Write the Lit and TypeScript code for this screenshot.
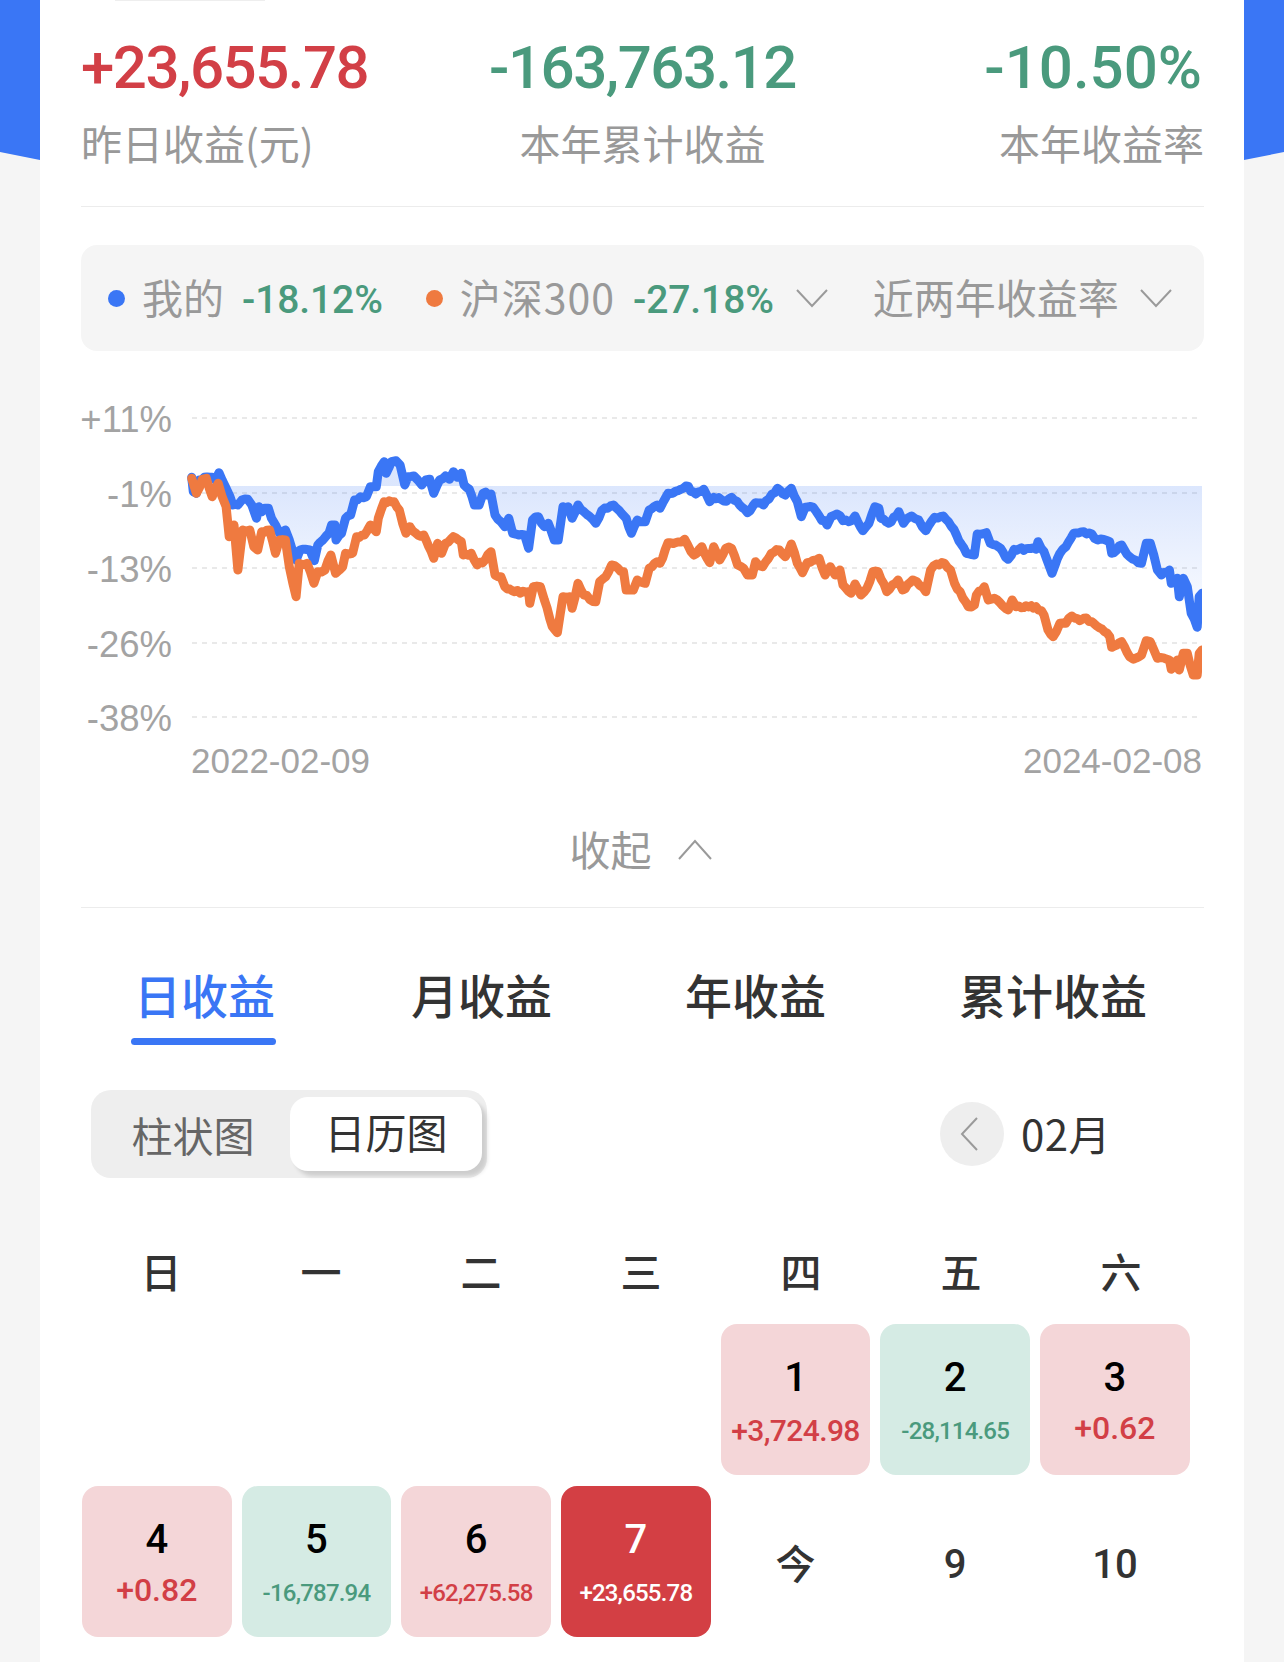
import { LitElement, html, svg, css } from "lit";
import { customElement } from "lit/decorators.js";

const LEFT_X = 2.529, RIGHT_X = 2.513;
const blueL = [333,262,337,305,345,310,352,270,365,262,385,262,393,270,402,248,410,270,420,295,430,320,437,345,450,345,460,330,475,328,485,345,497,385,503,350,510,365,518,355,527,355,535,385,545,405,555,430,570,420,580,450,590,490,597,510,607,480,620,478,632,480,643,512,652,465,665,450,680,430,687,405,695,405,698,450,712,430,722,385,735,375,745,330,760,320,775,320,785,290,800,290,805,245,820,215,825,250,838,215,850,212,860,225,872,285,880,260,895,258,905,270,915,285,925,270,935,268,945,310,960,270,975,258,985,268,995,245,1005,262,1015,250,1022,285,1035,298,1048,345,1060,345,1070,310,1090,312,1100,375,1115,395,1125,410,1135,385,1145,430,1160,435,1175,435,1185,475,1195,390,1210,380,1225,410,1235,400,1250,450,1260,450,1272,350,1285,350,1295,385,1310,345,1325,365,1340,380,1355,400,1370,362,1385,355,1400,345,1420,370,1432,385,1445,430,1460,390,1480,395,1490,360,1510,345];
const blueR = [0,355,20,310,45,302,65,288,90,312,110,298,125,335,135,322,160,333,180,322,200,345,220,368,240,338,260,345,295,295,315,315,330,295,345,335,355,380,365,352,385,352,400,378,420,405,430,380,445,372,460,392,475,395,490,378,510,422,525,400,540,350,550,355,555,385,575,400,600,365,612,400,632,378,650,390,668,422,690,382,712,378,725,395,745,435,770,490,790,495,797,432,820,428,830,460,850,470,875,508,890,478,945,478,950,455,965,485,985,550,1005,490,1020,470,1040,430,1065,425,1085,432,1100,450,1130,455,1135,490,1160,465,1180,500,1210,520,1222,460,1232,460,1250,540,1260,555,1280,540,1285,580,1300,565,1305,620,1315,565,1325,590,1335,670,1350,712,1355,620,1362,610];
const orangeL = [333,265,345,310,360,268,370,265,385,320,400,280,410,320,420,350,428,440,440,405,450,540,462,420,480,420,490,470,500,480,510,425,530,420,545,490,555,450,570,450,580,530,597,620,605,520,625,520,642,580,652,545,670,540,685,495,697,550,715,530,722,490,740,490,750,440,770,435,785,405,800,425,805,385,820,335,845,335,858,360,875,430,885,410,905,435,920,435,945,505,955,460,965,490,975,460,995,440,1015,455,1020,495,1040,490,1055,525,1075,510,1090,485,1100,555,1115,560,1125,590,1150,605,1185,605,1188,640,1197,590,1215,590,1225,630,1245,710,1258,728,1272,620,1290,620,1295,655,1310,580,1325,615,1355,635,1365,575,1380,560,1395,525,1425,545,1432,600,1450,600,1460,570,1480,580,1490,535,1510,515];
const orangeR = [0,520,20,458,45,456,62,448,85,495,105,470,125,518,135,470,150,510,165,475,180,475,195,525,210,535,220,555,232,555,240,515,258,530,280,490,300,480,315,500,330,462,345,520,358,548,370,518,400,505,415,555,428,530,440,555,452,540,460,585,480,610,490,582,505,615,520,595,535,545,548,545,570,605,598,570,610,600,635,570,645,575,668,605,680,540,695,522,715,520,730,540,740,580,775,650,790,645,795,615,815,590,825,630,840,625,875,660,885,630,895,650,945,650,965,675,975,720,988,740,1005,700,1020,700,1035,678,1055,692,1065,685,1085,695,1130,740,1135,772,1160,755,1180,800,1190,808,1210,795,1222,752,1232,755,1250,805,1280,810,1285,838,1300,810,1305,840,1315,790,1325,790,1340,855,1350,855,1355,790,1362,780];

const CHART_TOP = 380, CHART_LEFT = 81;
function mapPts(l: number[], r: number[]): [number, number][] {
  const out: [number, number][] = [];
  for (let i = 0; i < l.length; i += 2) out.push([60 + l[i] / LEFT_X - CHART_LEFT, 390 + l[i + 1] / 3 - CHART_TOP]);
  for (let i = 0; i < r.length; i += 2) out.push([660 + r[i] / RIGHT_X - CHART_LEFT, 390 + r[i + 1] / 3 - CHART_TOP]);
  return out;
}
function daily(pts: [number, number][], seed: number): string[] {
  const out: string[] = [];
  let n = seed;
  for (let i = 0; i < pts.length - 1; i++) {
    const [x0, y0] = pts[i], [x1, y1] = pts[i + 1];
    const steps = Math.max(1, Math.floor((x1 - x0) / 2.4));
    for (let s = 0; s < steps; s++) {
      const t = s / steps;
      n = (n * 9301 + 49297) % 233280;
      const j = s === 0 ? 0 : (n / 233280 - 0.5) * 3.2;
      out.push(`${(x0 + (x1 - x0) * t).toFixed(1)},${(y0 + (y1 - y0) * t + j).toFixed(1)}`);
    }
  }
  const last = pts[pts.length - 1];
  out.push(`${last[0].toFixed(1)},${last[1].toFixed(1)}`);
  return out;
}
const bluePts = daily(mapPts(blueL, blueR), 17);
const orangePts = daily(mapPts(orangeL, orangeR), 91);
const BASE = 486 - CHART_TOP;
const areaPts = [`${bluePts[0].split(",")[0]},${BASE}`, ...bluePts, `${bluePts[bluePts.length - 1].split(",")[0]},${BASE}`];

const gridYs = [418, 493, 568, 643, 717].map((y) => y - CHART_TOP);
const yLabels: [string, number][] = [["+11%", 432], ["-1%", 507], ["-13%", 582], ["-26%", 657], ["-38%", 731]];

type Cell = { d?: string; v?: string; k?: string; s?: string };
const cells: Cell[] = [
  {}, {}, {}, {},
  { d: "1", v: "+3,724.98", k: "pink", s: "m" },
  { d: "2", v: "-28,114.65", k: "mint", s: "s" },
  { d: "3", v: "+0.62", k: "pink", s: "l" },
  { d: "4", v: "+0.82", k: "pink", s: "l" },
  { d: "5", v: "-16,787.94", k: "mint", s: "s" },
  { d: "6", v: "+62,275.58", k: "pink", s: "s" },
  { d: "7", v: "+23,655.78", k: "red", s: "s" },
  { d: "今" }, { d: "9" }, { d: "10" },
];

const down = html`<svg class="chev" width="32" height="20" viewBox="0 0 32 20"><path d="M1 2 L16 18 L31 2" fill="none" stroke="#9a9a9a" stroke-width="2"/></svg>`;

@customElement("app-root")
export class AppRoot extends LitElement {
  static styles = css`
    :host { display: block; position: relative; width: 1284px; height: 1662px; overflow: hidden; background: #f5f5f5;
      font-family: "Noto Sans CJK SC", sans-serif; color: #333; }
    .blue { position: absolute; left: 0; top: 0; width: 100%; height: 160px; background: #3a76f5;
      clip-path: polygon(0 0, 100% 0, 100% 152px, calc(100% - 40px) 160px, 40px 160px, 0 152px); }
    .card { position: relative; margin: 0 40px; height: 1662px; background: #fff; padding: 0 40px 0 41px; box-sizing: border-box; }
    .sliver { width: 150px; height: 1px; margin-left: 34px; background: #eee; }
    .num { font-family: Roboto, "Liberation Sans", sans-serif; font-weight: 500; }
    .up { color: #d23f46; } .dn { color: #4a9a7d; }
    .stats { display: grid; grid-template-columns: 1fr 1fr 1fr; padding-top: 32px; padding-bottom: 39px; border-bottom: 1px solid #ececec; }
    .stat:nth-child(2) { text-align: center; } .stat:nth-child(3) { text-align: right; }
    .val { font-size: 60px; line-height: 70px; letter-spacing: -1.5px; white-space: nowrap; }
    .val.wide { letter-spacing: 0; padding-right: 2px; }
    .lab { font-size: 41px; line-height: 50px; margin-top: 14px; color: #999; white-space: nowrap; }
    .legend { margin-top: 38px; height: 106px; background: #f5f5f5; border-radius: 16px; display: flex; align-items: center; padding-left: 27px; font-size: 41px; color: #999; white-space: nowrap; box-sizing: border-box; }
    .legend .t { margin-bottom: 4px; }
    .legend .wd { letter-spacing: 1px; }
    .dot { width: 17px; height: 17px; border-radius: 50%; margin-right: 17px; flex: none; }
    .dot.b { background: #3a76f5; } .dot.o { background: #ef7a40; margin-left: 43px; }
    .pct { font-size: 39px; letter-spacing: -0.1px; margin-left: 18px; margin-top: 4px; }
    .chev { flex: none; display: block; }
    .c2 { margin-left: 22px; } .c3 { margin-left: 21px; }
    .range { margin-left: 45px; }
    .chart { display: block; margin-top: 29px; }
    .chart text { font-family: "Liberation Sans", sans-serif; font-size: 35px; fill: #a3a3a3; }
    .chart text.y { font-size: 36.5px; }
    .fold { margin-top: 35px; height: 50px; display: flex; justify-content: center; align-items: center; gap: 26px; font-size: 41px; color: #999; padding-right: 4px; }
    .fold span { margin-bottom: 4px; line-height: 46px; }
    .hr { margin-top: 32px; border-top: 1px solid #ececec; }
    .tabs { display: flex; gap: 133px; margin-top: 56px; padding-left: 56px; height: 81px; box-sizing: border-box; }
    .tab { position: relative; font-size: 47px; line-height: 60px; height: 60px; font-weight: 500; color: #333; white-space: nowrap; }
    .tab.on { color: #3a76f5; margin-left: -3px; margin-right: 3px; }
    .tab.on::after { content: ""; position: absolute; left: -3px; right: -1px; top: 74px; height: 7px; border-radius: 4px; background: #3a76f5; }
    .tools { display: flex; align-items: center; margin-top: 45px; height: 88px; padding-left: 10px; }
    .seg { display: flex; align-items: center; width: 396px; height: 88px; background: #eee; border-radius: 20px; box-sizing: border-box; padding: 7px 5px; }
    .seg div { font-size: 41px; text-align: center; line-height: 68px; }
    .seg .off { width: 194px; color: #666; }
    .seg .sel { width: 192px; height: 74px; background: #fff; color: #333; border-radius: 18px; box-shadow: 5px 5px 4px rgba(0,0,0,.14); }
    .month { margin-left: auto; margin-right: 93px; display: flex; align-items: center; gap: 17px; font-size: 42px; letter-spacing: .5px; color: #333; line-height: 60px; }
    .month span { margin-bottom: 3px; }
    .round { width: 64px; height: 64px; border-radius: 50%; background: #eee; display: flex; align-items: center; justify-content: center; margin-bottom: 1px; padding-right: 6px; box-sizing: border-box; }
    .week { display: grid; grid-template-columns: repeat(7, 160px); margin-top: 67px; font-size: 41px; line-height: 50px; text-align: center; font-weight: 500; }
    .days { display: grid; grid-template-columns: repeat(7, 149.5px); grid-auto-rows: 151px; gap: 11px 10.2px; margin: 29px 0 0 1px; }
    .cell { border-radius: 16px; text-align: center; box-sizing: border-box; padding-top: 29px; }
    .cell.pink { background: #f4d6d8; } .cell.mint { background: #d5ebe4; }
    .cell.red { background: #d33f44; color: #fff; }
    .cell .d { font-size: 40px; line-height: 50px; color: #000; }
    .cell.red .d { color: #fff; }
    .cell .v { line-height: 40px; margin-top: 8px; white-space: nowrap; }
    .cell.red .v { color: #fff; }
    .cell .v.l { font-size: 32px; margin-top: 5px; }
    .v.m { font-size: 30px; letter-spacing: -0.6px; }
    .v.s { font-size: 24px; letter-spacing: -0.8px; }
    .plain { display: flex; align-items: center; justify-content: center; padding: 0; font-size: 40px; color: #333; font-weight: 500; }
    .plain.num { padding-top: 6px; }
  `;

  render() {
    return html`
      <div class="blue"></div>
      <div class="card">
        <div class="sliver"></div>
        <div class="stats">
          <div class="stat"><div class="val num up">+23,655.78</div><div class="lab">昨日收益(元)</div></div>
          <div class="stat"><div class="val num dn">-163,763.12</div><div class="lab">本年累计收益</div></div>
          <div class="stat"><div class="val num dn wide">-10.50%</div><div class="lab">本年收益率</div></div>
        </div>
        <div class="legend">
          <span class="dot b"></span><span class="t">我的</span><span class="pct num dn">-18.12%</span>
          <span class="dot o"></span><span class="t wd">沪深300</span><span class="pct num dn">-27.18%</span>
          <span class="c2">${down}</span>
          <span class="range t">近两年收益率</span>
          <span class="c3">${down}</span>
        </div>
        <svg class="chart" width="1123" height="410" viewBox="0 0 1123 410">
          <defs>
            <linearGradient id="fill" gradientUnits="userSpaceOnUse" x1="0" y1="${BASE}" x2="0" y2="${640 - CHART_TOP}">
              <stop offset="0" stop-color="#3a76f5" stop-opacity=".18"></stop>
              <stop offset="1" stop-color="#3a76f5" stop-opacity="0"></stop>
            </linearGradient>
            <clipPath id="plot"><rect x="100" y="0" width="1021" height="340"></rect></clipPath>
          </defs>
          ${gridYs.map((y) => svg`<line x1="111" x2="1121" y1="${y}" y2="${y}" stroke="#e2e2e2" stroke-width="1.5" stroke-dasharray="5 5"></line>`)}
          <polygon points="${areaPts.join(" ")}" fill="url(#fill)"></polygon>
          <g clip-path="url(#plot)">
            <polyline points="${bluePts.join(" ")}" fill="none" stroke="#3a76f5" stroke-width="9" stroke-linejoin="round" stroke-linecap="round"></polyline>
            <polyline points="${orangePts.join(" ")}" fill="none" stroke="#ef7a40" stroke-width="9" stroke-linejoin="round" stroke-linecap="round"></polyline>
          </g>
          ${yLabels.map(([t, y]) => svg`<text class="y" x="91" y="${y - CHART_TOP}" text-anchor="end">${t}</text>`)}
          <text x="110" y="${773 - CHART_TOP}">2022-02-09</text>
          <text x="1121" y="${773 - CHART_TOP}" text-anchor="end">2024-02-08</text>
        </svg>
        <div class="fold"><span>收起</span><svg width="34" height="22" viewBox="0 0 34 22"><path d="M1 20 L17 2 L33 20" fill="none" stroke="#9a9a9a" stroke-width="2"/></svg></div>
        <div class="hr"></div>
        <div class="tabs">
          <div class="tab on">日收益</div><div class="tab">月收益</div><div class="tab">年收益</div><div class="tab">累计收益</div>
        </div>
        <div class="tools">
          <div class="seg"><div class="off">柱状图</div><div class="sel">日历图</div></div>
          <div class="month">
            <div class="round"><svg width="20" height="34" viewBox="0 0 20 34"><path d="M18 1 L3 17 L18 33" fill="none" stroke="#9a9a9a" stroke-width="2"/></svg></div>
            <span>02月</span>
          </div>
        </div>
        <div class="week">${["日","一","二","三","四","五","六"].map((w) => html`<div>${w}</div>`)}</div>
        <div class="days">
          ${cells.map((c) =>
            !c.d ? html`<div></div>` :
            c.v ? html`<div class="cell ${c.k}"><div class="d num">${c.d}</div><div class="v num ${c.s} ${c.k === "mint" ? "dn" : "up"}">${c.v}</div></div>`
                : html`<div class="cell plain ${c.d === "今" ? "" : "num"}">${c.d}</div>`)}
        </div>
      </div>
    `;
  }
}
